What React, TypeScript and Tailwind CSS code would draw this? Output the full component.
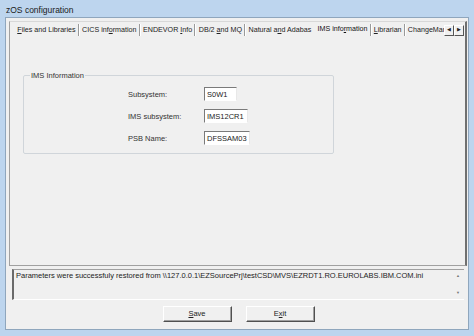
import React from "react";

const font = { fontFamily: '"Liberation Sans", Arial, sans-serif' };

type Tab = { pre: string; u: string; post: string; active?: boolean };

const tabs: Tab[] = [
  { pre: "", u: "F", post: "iles and Libraries" },
  { pre: "CICS inf", u: "o", post: "rmation" },
  { pre: "ENDEVOR ", u: "I", post: "nfo" },
  { pre: "DB/2 ", u: "a", post: "nd MQ" },
  { pre: "Natural a", u: "n", post: "d Adabas" },
  { pre: "IMS info", u: "r", post: "mation", active: true },
  { pre: "", u: "L", post: "ibrarian" },
  { pre: "ChangeMan", u: "", post: "" },
];

const fields = [
  { label: "Subsystem:", value: "S0W1", w: "w-[33px]" },
  { label: "IMS subsystem:", value: "IMS12CR1", w: "w-[44px]" },
  { label: "PSB Name:", value: "DFSSAM03", w: "w-[46px]" },
];

const Sep = () => <div className="h-[12px] w-[2px] shrink-0 border-l border-l-[#9a9a9a] border-r border-r-white" />;

export default function App() {
  return (
    <div className="flex h-[336px] w-[474px] flex-col bg-[#bdd5ee] px-[5px] pb-[6px] text-black" style={font}>
      {/* title bar */}
      <div className="flex h-[17px] items-center pl-[1px] pt-[3px] text-[8.5px] text-[#1a1a1a]">zOS configuration</div>

      <div className="flex flex-1 flex-col border border-[#8fa6bd] bg-[#f0f0f0] pl-[3px] pr-[1px] pt-[3px]">
        {/* tab control */}
        <div className="flex h-[245px] flex-col border-l border-t border-l-[#a0a0a0] border-t-[#d8d8d8] border-r-2 border-r-[#707070] border-b border-b-[#a0a0a0]">
          <div className="flex h-[15px] items-center pl-[5px] pt-[1px] text-[7.15px] text-[#222]">
            {tabs.map((t, i) => (
              <React.Fragment key={i}>
                {i > 0 && !t.active && !tabs[i - 1].active && <Sep />}
                {t.active && <div className="w-[3px] shrink-0" />}
                <div
                  className={
                    t.active
                      ? "mb-[2px] shrink-0 whitespace-nowrap px-[1px] text-[#111]"
                      : i === tabs.length - 1
                        ? "min-w-0 flex-1 overflow-hidden whitespace-nowrap pl-[2px]"
                        : "shrink-0 whitespace-nowrap px-[2.25px]"
                  }
                >
                  {t.pre}
                  <span className="underline">{t.u}</span>
                  {t.post}
                </div>
                {t.active && <div className="w-[1px] shrink-0" />}
                {t.active && <Sep />}
              </React.Fragment>
            ))}
            <div className="flex shrink-0 pr-[1px]">
              <div className="flex h-[11px] w-[10px] items-center justify-center overflow-hidden border border-l-white border-t-white border-b-[#555] border-r-[#555] bg-[#f0f0f0] text-[5px]">◀</div>
              <div className="flex h-[11px] w-[10px] items-center justify-center overflow-hidden border border-l-white border-t-white border-b-[#555] border-r-[#555] bg-[#f0f0f0] text-[5px]">▶</div>
            </div>
          </div>

          <div className="flex-1 pl-[13px] pt-[33px]">
            <fieldset className="h-[84px] w-[311px] rounded-[2px] border border-[#d0d5da] px-[6px]">
              <legend className="px-[1px] text-[7.5px] text-[#333]">IMS Information</legend>
              <div className="grid grid-cols-[76px_auto] gap-y-[8px] pl-[98px] pt-[6px] text-[7.5px] text-[#333]">
                {fields.map((f) => (
                  <React.Fragment key={f.label}>
                    <div className="flex h-[14px] items-center">{f.label}</div>
                    <div
                      className={`flex h-[14px] ${f.w} items-center border-l border-t border-l-[#7a7a7a] border-t-[#7a7a7a] border-b border-r border-b-white border-r-[#e8e8e8] bg-white pl-[2px] text-[#222]`}
                    >
                      {f.value}
                    </div>
                  </React.Fragment>
                ))}
              </div>
            </fieldset>
          </div>
        </div>

        {/* status log */}
        <div className="ml-[3px] mr-[3px] mt-[3px] flex h-[31px] border-l-2 border-t border-l-[#6a6a6a] border-t-[#a0a0a0] border-b border-b-white">
          <div className="flex-1 pl-[2px] pt-[1px] text-[7.5px] leading-[10px] text-[#222]">
            Parameters were successfuly restored from \\127.0.0.1\EZSourcePrj\testCSD\MVS\EZRDT1.RO.EUROLABS.IBM.COM.ini
          </div>
          <div className="flex w-[12px] flex-col items-center justify-between py-[3px] text-[4px] text-[#777]">
            <span>▲</span>
            <span>▼</span>
          </div>
        </div>

        {/* buttons */}
        <div className="flex justify-center gap-[14px] pl-[1px] pt-[6px]">
          <button className="flex h-[16px] w-[69px] items-center justify-center border border-l-white border-t-white border-b-[#505050] border-r-[#505050] bg-[#f0f0f0] text-[7.5px] text-[#222] shadow-[inset_-1px_-1px_0_#a0a0a0]">
            <span className="underline">S</span>ave
          </button>
          <button className="flex h-[16px] w-[69px] items-center justify-center border border-l-white border-t-white border-b-[#505050] border-r-[#505050] bg-[#f0f0f0] text-[7.5px] text-[#222] shadow-[inset_-1px_-1px_0_#a0a0a0]">
            E<span className="underline">x</span>it
          </button>
        </div>
      </div>
    </div>
  );
}
